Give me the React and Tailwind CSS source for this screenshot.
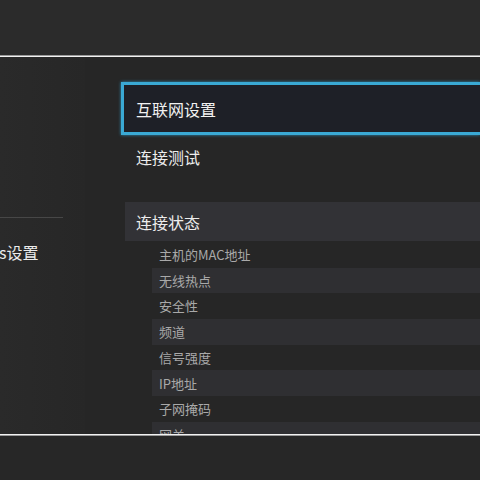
export default function App() {
  const rows = ["主机的MAC地址", "无线热点", "安全性", "频道", "信号强度", "IP地址", "子网掩码", "网关"];
  const font = { fontFamily: '"Noto Sans CJK SC", "Noto Sans", sans-serif' };

  return (
    <div className="flex h-[480px] w-[480px] flex-col overflow-hidden bg-[#262626]" style={font}>
      {/* top bar */}
      <div className="h-[55px] shrink-0 bg-[#2b2b2b]" />
      <div className="h-px shrink-0 bg-[#9a9a9a]" />
      <div className="h-px shrink-0 bg-[#f2f2f2]" />

      <div className="flex h-[377px] shrink-0 overflow-hidden">
        {/* side menu */}
        <div className="flex w-[85px] shrink-0 flex-col bg-gradient-to-r from-[#2a2a2a] to-[#272727]">
          <div className="h-[160px]" />
          <div className="h-px w-[63px] bg-[#474747]" />
          <div className="flex h-[68px] items-center overflow-hidden whitespace-nowrap text-[16px] text-[#ececec]">
            <span className="-ml-[1px]">s设置</span>
          </div>
        </div>

        {/* content */}
        <div className="flex flex-1 flex-col pl-[36px] pt-[25px]">
          <div className="flex h-[53px] shrink-0 items-center border-[3px] border-r-0 border-[#3aa9d4] bg-[#1e2027] pl-[12px] text-[16px] text-[#f2f2f2] shadow-[0_0_3px_#2f8fb5]">
            互联网设置
          </div>
          <div className="flex h-[43px] shrink-0 items-center pl-[15px] text-[16px] text-[#ededed]">
            连接测试
          </div>
          <div className="h-[24px] shrink-0" />
          <div className="ml-[4px] flex h-[39px] shrink-0 items-center bg-[#323236] pl-[11px] text-[16px] text-[#ededed]">
            连接状态
          </div>
          <div className="ml-[31px] flex flex-col pt-[1px]">
            {rows.map((r, i) => (
              <div
                key={r}
                className={`flex h-[25.7px] shrink-0 items-center pl-[7px] text-[13px] text-[#a9a9a9] ${i % 2 === 1 ? "bg-[#2f2f32]" : "bg-[#262626]"}`}
              >
                {r}
              </div>
            ))}
          </div>
        </div>
      </div>

      <div className="h-px shrink-0 bg-[#f2f2f2]" />
      <div className="h-px shrink-0 bg-[#9a9a9a]" />
      <div className="flex-1 bg-[#272727]" />
    </div>
  );
}
